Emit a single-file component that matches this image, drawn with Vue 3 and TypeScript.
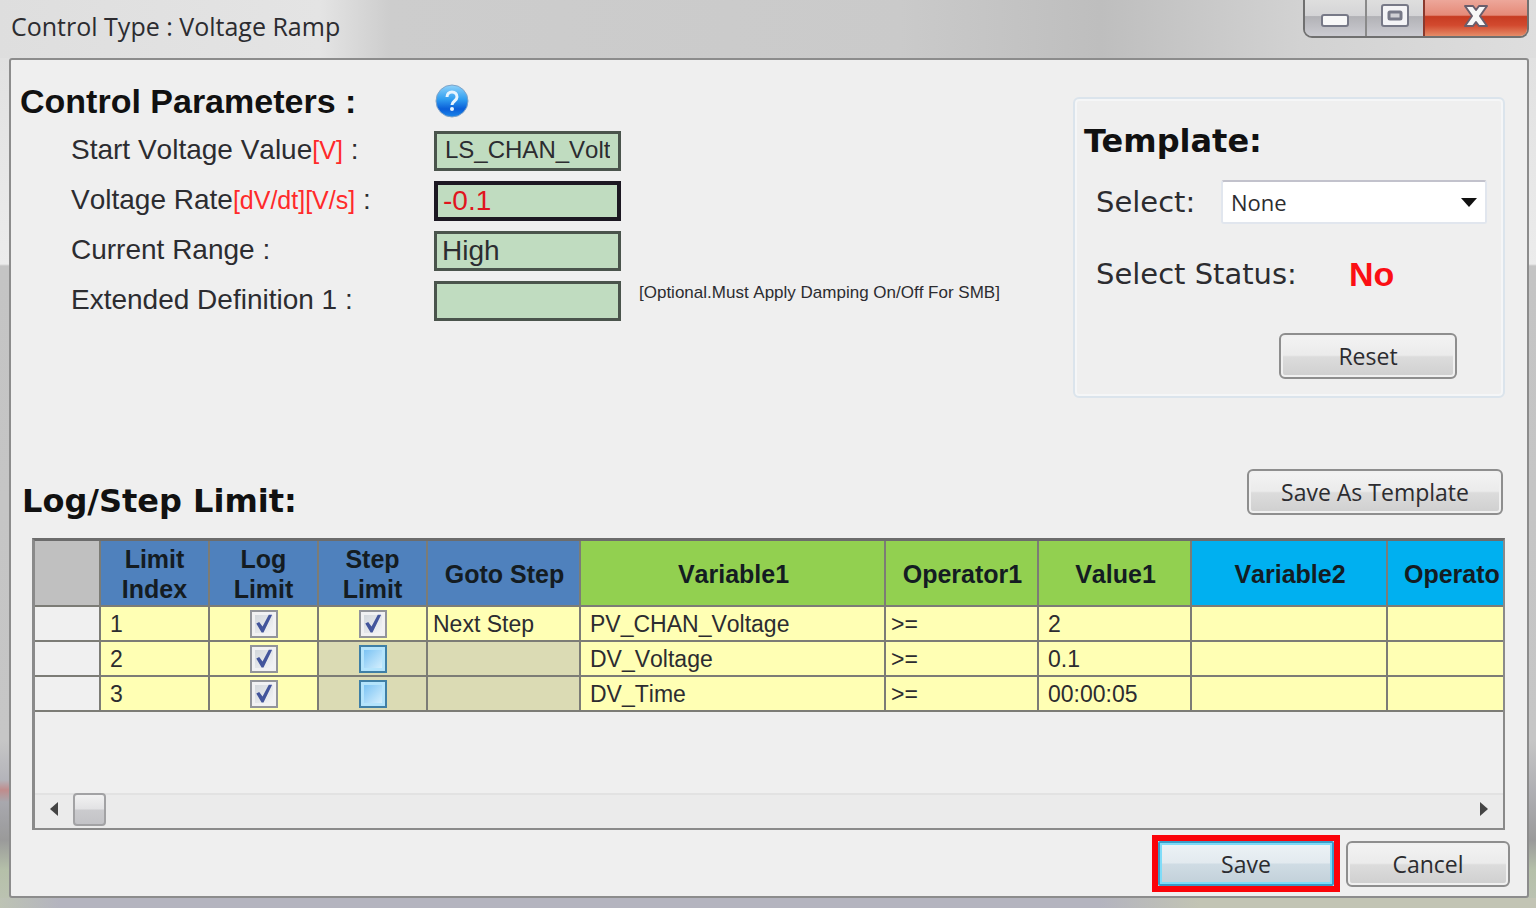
<script setup lang="ts">
import { ref } from 'vue'

interface LimitRow {
  index: number
  log: boolean
  step: boolean
  goto: string
  variable: string
  operator: string
  value: string
}

const startVoltage = ref('LS_CHAN_Volt')
const voltageRate = ref('-0.1')
const currentRange = ref('High')
const extended = ref('')
const template = ref('None')

const headers = [
  { text: 'Limit Index', tone: 'blue two-line' },
  { text: 'Log Limit', tone: 'blue two-line' },
  { text: 'Step Limit', tone: 'blue two-line' },
  { text: 'Goto Step', tone: 'blue' },
  { text: 'Variable1', tone: 'green' },
  { text: 'Operator1', tone: 'green' },
  { text: 'Value1', tone: 'green' },
  { text: 'Variable2', tone: 'cyan' },
  { text: 'Operato', tone: 'cyan last' },
]

const rows = ref<LimitRow[]>([
  { index: 1, log: true, step: true, goto: 'Next Step', variable: 'PV_CHAN_Voltage', operator: '>=', value: '2' },
  { index: 2, log: true, step: false, goto: '', variable: 'DV_Voltage', operator: '>=', value: '0.1' },
  { index: 3, log: true, step: false, goto: '', variable: 'DV_Time', operator: '>=', value: '00:00:05' },
])
</script>

<template>
  <div class="window">
    <header class="titlebar">
      <h1 class="title">Control Type : Voltage Ramp</h1>
      <div class="caption">
        <button type="button" class="cap min" aria-label="Minimize">
          <svg width="28" height="14" viewBox="0 0 28 14"><rect x="1" y="1" width="26" height="11" rx="2" fill="#f8f8f8" stroke="#777987" stroke-width="2" /></svg>
        </button>
        <button type="button" class="cap max" aria-label="Maximize">
          <svg width="28" height="24" viewBox="0 0 28 24"><rect x="1" y="1" width="26" height="21" rx="2" fill="#f4f4f6" stroke="#777987" stroke-width="2" /><rect x="8" y="8" width="12" height="7" rx="1" fill="#d0d0d4" stroke="#777987" stroke-width="3" /></svg>
        </button>
        <button type="button" class="cap close" aria-label="Close">
          <svg width="26" height="22" viewBox="0 0 26 22"><path d="M2 1h8l3 4 3-4h8l-7 10 7 10h-8l-3-4-3 4H2l7-10z" fill="#f7f7f7" stroke="#6a5e6c" stroke-width="2" stroke-linejoin="round" /></svg>
        </button>
      </div>
    </header>

    <main class="client">
      <section class="top">
        <div class="params">
          <h2 class="heading">Control Parameters :</h2>
          <button type="button" class="help" aria-label="Help">
            <svg width="36" height="36" viewBox="0 0 36 36">
              <defs>
                <linearGradient id="ball" x1="0" y1="0" x2="0" y2="1">
                  <stop offset="0" stop-color="#8fd3fa" />
                  <stop offset="0.45" stop-color="#2f9df0" />
                  <stop offset="0.75" stop-color="#0a5ed8" />
                  <stop offset="1" stop-color="#1a86ea" />
                </linearGradient>
              </defs>
              <circle cx="18" cy="18" r="16" fill="url(#ball)" stroke="#7fa3c8" stroke-width="1" />
              <path d="M13 14c0-3 2-5 5-5s5 2 5 5c0 4-5 4-5 8" fill="none" stroke="#e8f5ff" stroke-width="3" />
              <circle cx="18" cy="26" r="2" fill="#e8f5ff" />
            </svg>
          </button>

          <label class="label" for="start">Start Voltage Value<span class="unit">[V]</span> :</label>
          <input id="start" v-model="startVoltage" class="field small" type="text" />

          <label class="label" for="rate">Voltage Rate<span class="unit">[dV/dt][V/s]</span> :</label>
          <input id="rate" v-model="voltageRate" class="field active" type="text" />

          <label class="label" for="range">Current Range :</label>
          <input id="range" v-model="currentRange" class="field" type="text" />

          <label class="label" for="ext">Extended Definition 1 :</label>
          <input id="ext" v-model="extended" class="field" type="text" />
          <span class="note">[Optional.Must Apply Damping On/Off For SMB]</span>
        </div>

        <section class="template">
          <h2 class="wide">Template:</h2>
          <div class="line">
            <label class="wide-label" for="tpl">Select:</label>
            <div class="combo">
              <select id="tpl" v-model="template">
                <option>None</option>
              </select>
              <svg class="arrow" width="16" height="9" viewBox="0 0 16 9"><path d="M0 0h16L8 9z" fill="#111" /></svg>
            </div>
          </div>
          <div class="line status">
            <span class="wide-label">Select Status:</span>
            <strong class="no">No</strong>
          </div>
          <button type="button" class="btn reset">Reset</button>
        </section>
      </section>

      <div class="bar">
        <h2 class="wide">Log/Step Limit:</h2>
        <button type="button" class="btn save-as">Save As Template</button>
      </div>

      <section class="grid">
        <div class="viewport">
          <table>
            <colgroup>
              <col class="c-head" />
              <col class="c-narrow" /><col class="c-narrow" /><col class="c-narrow" />
              <col class="c-mid" /><col class="c-var1" /><col class="c-mid" /><col class="c-mid" />
              <col class="c-var2" /><col />
            </colgroup>
            <thead>
              <tr>
                <td class="corner"></td>
                <th v-for="h in headers" :key="h.text" :class="h.tone" scope="col">{{ h.text }}</th>
              </tr>
            </thead>
            <tbody>
              <tr v-for="r in rows" :key="r.index">
                <td class="rowhead"></td>
                <td class="inset">{{ r.index }}</td>
                <td class="check"><input v-model="r.log" type="checkbox" :aria-label="`Log limit ${r.index}`" /></td>
                <td class="check" :class="{ off: !r.step }"><input v-model="r.step" type="checkbox" :aria-label="`Step limit ${r.index}`" /></td>
                <td :class="{ off: !r.step }">{{ r.goto }}</td>
                <td class="inset">{{ r.variable }}</td>
                <td>{{ r.operator }}</td>
                <td class="inset">{{ r.value }}</td>
                <td></td>
                <td class="last"></td>
              </tr>
            </tbody>
          </table>
        </div>
        <div class="scroll">
          <button type="button" class="step" aria-label="Scroll left">
            <svg width="10" height="16" viewBox="0 0 10 16"><path d="M9 1v14L1 8z" fill="#444" /></svg>
          </button>
          <div class="thumb"></div>
          <button type="button" class="step right" aria-label="Scroll right">
            <svg width="10" height="16" viewBox="0 0 10 16"><path d="M1 1v14l8-7z" fill="#444" /></svg>
          </button>
        </div>
      </section>

      <footer class="actions">
        <div class="highlight"><button type="button" class="btn primary">Save</button></div>
        <button type="button" class="btn cancel">Cancel</button>
      </footer>
    </main>
  </div>
</template>

<style>
body {
  margin: 0;
}
</style>

<style scoped>
* {
  box-sizing: border-box;
}
.window {
  min-height: 100vh;
  display: flex;
  flex-direction: column;
  padding: 0 7px 10px 9px;
  font-family: "Liberation Sans", Arial, sans-serif;
  font-kerning: none;
  color: #2c2c30;
  background:
    linear-gradient(90deg, #bdc3b4 0, #b4b4bf 60px, #b4b4bf 1100px, #c2c4b4 1200px) bottom / 100% 10px no-repeat,
    linear-gradient(90deg, #dedede 0, #e4e4e4 320px, #cdcdcd 390px, #cacaca 900px, #bebebe 1100px, #d2d2d2 1300px, #dedede 100%) top / 100% 58px no-repeat,
    linear-gradient(180deg, #dedede 0, #ececec 264px, #c4c4c4 266px, #c6c6c6 740px, #b4b4ba 780px, #c08c8c 790px, #a8a8ae 802px, #9a9a9a 840px, #b5c0a9 870px, #bdc3b4 100%) left / 9px 100% no-repeat,
    linear-gradient(180deg, #dedede 0, #ececec 264px, #c4c4c4 266px, #c6c6c6 740px, #b0b0b4 790px, #9a9a9a 840px, #b5c0a9 870px, #bdc3b4 100%);
}
h1,
h2 {
  margin: 0;
}
button,
input,
select {
  font-family: inherit;
  font-kerning: inherit;
  color: inherit;
  margin: 0;
}
.titlebar {
  height: 58px;
  display: flex;
  justify-content: space-between;
  align-items: flex-start;
}
.title {
  padding: 9px 2px;
  font: 400 25px/34px "Open Sans", sans-serif;
}
.caption {
  display: flex;
  height: 38px;
  border: 2px solid #707070;
  border-top: 0;
  border-radius: 0 0 9px 9px;
  overflow: hidden;
}
.cap {
  border: 0;
  padding: 0 0 4px;
  display: grid;
  place-items: center;
  background: linear-gradient(#dedede 0, #d4d4d6 44%, #b2b2b6 46%, #cbcbd1 100%);
}
.min {
  width: 60px;
  padding-top: 10px;
}
.max {
  width: 58px;
  border-left: 2px solid #8a8a8a;
}
.close {
  width: 104px;
  border-left: 2px solid #8b3a2e;
  background: linear-gradient(#eda79a 0, #e58a78 42%, #c73c22 46%, #d2492e 70%, #e58c68 100%);
}
.client {
  flex: 1;
  display: flex;
  flex-direction: column;
  background: #efefef;
  border: 2px solid #8c8c8c;
  border-radius: 3px;
  padding: 21px 22px 4px 9px;
}
.top {
  display: flex;
  justify-content: space-between;
  align-items: flex-start;
}
.params {
  display: grid;
  grid-template-columns: 414px 187px auto;
  grid-auto-rows: 40px;
  row-gap: 10px;
}
.heading {
  font-size: 34px;
  line-height: 40px;
  color: #111;
}
.help {
  grid-column: 2 / 4;
  justify-self: start;
  border: 0;
  padding: 0;
  background: none;
  line-height: 0;
}
.label {
  grid-column: 1;
  padding-left: 51px;
  font-size: 28px;
  line-height: 38px;
  white-space: nowrap;
}
.unit {
  font-size: 25px;
  color: #ff2a2a;
}
.field {
  grid-column: 2;
  width: 100%;
  border: 3px solid #4a544c;
  background: #c0dcc0;
  padding: 0 5px;
  font-size: 28px;
}
.small {
  font-size: 24px;
  padding: 0 8px 2px;
}
.active {
  border: 4px solid #1c1822;
  color: #e0141e;
}
.note {
  grid-column: 3;
  padding-left: 18px;
  font-size: 17px;
  line-height: 24px;
  white-space: nowrap;
}
.template {
  width: 432px;
  margin-top: 16px;
  padding: 28px 16px 17px 9px;
  border: 2px solid #dbe4ec;
  border-radius: 6px;
  box-shadow: inset 0 0 0 2px #f5f6f7;
  display: flex;
  flex-direction: column;
}
.wide {
  font: 700 32px/28px "DejaVu Sans", Verdana, sans-serif;
  color: #111;
}
.line {
  display: flex;
  align-items: center;
  justify-content: space-between;
  padding-left: 12px;
  margin-top: 25px;
}
.wide-label {
  font: 400 29px/40px "DejaVu Sans", Verdana, sans-serif;
  white-space: nowrap;
}
.combo {
  width: 266px;
  display: grid;
  align-items: center;
}
.combo select {
  grid-area: 1 / 1;
  height: 44px;
  appearance: none;
  border: 2px solid #e1e6ee;
  border-top-color: #c2c2cc;
  border-radius: 3px;
  background: #fff;
  padding: 0 8px;
  font: 400 22px/30px "Open Sans", sans-serif;
}
.arrow {
  grid-area: 1 / 1;
  justify-self: end;
  margin-right: 10px;
  pointer-events: none;
}
.status {
  justify-content: flex-start;
  gap: 52px;
  margin-top: 30px;
}
.no {
  font-size: 34px;
  line-height: 38px;
  color: #fb0f14;
}
.btn {
  height: 46px;
  border: 2px solid #8e8e8e;
  border-radius: 6px;
  padding: 0;
  background: linear-gradient(#f3f3f3 0, #ebebeb 48%, #dcdcdc 52%, #cfcfcf 100%);
  box-shadow: inset 0 0 0 2px #f0f0f0;
  font: 400 23px/32px "Open Sans", sans-serif;
}
.reset {
  width: 178px;
  align-self: flex-end;
  margin: 39px 30px 0 0;
}
.bar {
  display: flex;
  justify-content: space-between;
  align-items: flex-end;
  margin: 71px 2px 0;
}
.save-as {
  width: 256px;
}
.grid {
  flex: 1;
  display: flex;
  flex-direction: column;
  margin: 23px 0 5px 12px;
  border: 2px solid #8a8a8a;
  border-top: 3px solid #6c6c6c;
  border-left-width: 3px;
  min-width: 0;
}
.viewport {
  flex: 1;
}
table {
  width: 100%;
  table-layout: fixed;
  border-collapse: separate;
  border-spacing: 0;
}
.c-head {
  width: 66px;
}
.c-narrow {
  width: 109px;
}
.c-mid {
  width: 153px;
}
.c-var1 {
  width: 305px;
}
.c-var2 {
  width: 196px;
}
th,
td {
  border: solid #7c7c76;
  border-width: 0 2px 2px 0;
}
th {
  height: 66px;
  padding: 2px 0 0 2px;
  font-size: 25px;
  line-height: 30px;
  color: #141c22;
  white-space: nowrap;
}
.two-line {
  padding: 2px 14px 0;
  white-space: normal;
}
.blue {
  background: #4f81bd;
}
.green {
  background: #92d050;
}
.cyan {
  background: #00b0f0;
}
td {
  height: 35px;
  padding: 0 5px;
  background: #ffffb4;
  font-size: 23px;
  line-height: 30px;
  white-space: nowrap;
}
.last {
  border-right: 0;
}
th.last {
  padding-left: 16px;
  text-align: left;
}
.corner {
  background: #c0c0c0;
}
.rowhead {
  background: #f0f0f0;
}
.inset {
  padding-left: 9px;
}
.off {
  background: #dbdbb4;
}
.check {
  padding: 0;
  text-align: center;
  line-height: 0;
}
.check input {
  appearance: none;
  width: 28px;
  height: 28px;
  vertical-align: middle;
  border: 2px solid #92949a;
  background: linear-gradient(135deg, #cdd2d8, #f8f8fa);
  box-shadow: inset 0 0 0 3px #f1f1f3;
}
.check input::after {
  content: "";
  display: block;
  width: 24px;
  height: 24px;
  background: #43559c;
  clip-path: polygon(20% 50%, 32% 44%, 46% 62%, 72% 14%, 86% 14%, 50% 88%, 42% 88%);
}
.check.off input {
  border-color: #3f7fa6;
  background: linear-gradient(135deg, #6dbcf2, #e2f6ff);
  box-shadow: inset 0 0 0 3px #b4e4fc;
}
.check.off input::after {
  display: none;
}
.scroll {
  display: flex;
  align-items: flex-start;
  height: 35px;
  background: #ebebeb;
  box-shadow: inset 0 2px 0 #e2e2e2;
}
.step {
  width: 38px;
  height: 32px;
  border: 0;
  padding: 0;
  background: none;
  line-height: 0;
}
.right {
  margin-left: auto;
}
.thumb {
  width: 33px;
  height: 33px;
  border: 2px solid #a2a2a4;
  border-radius: 4px;
  background: linear-gradient(#f2f2f2 0, #e2e2e4 48%, #cbcbce 52%, #c3c3c7 100%);
}
.actions {
  display: flex;
  justify-content: flex-end;
  align-items: center;
  gap: 6px;
  margin-right: -5px;
}
.highlight {
  border: 6px solid #fb0309;
  line-height: 0;
}
.primary {
  width: 176px;
  height: 45px;
  border-color: #3a9cc8;
  border-radius: 2px;
  background: linear-gradient(#edf3f6 0, #e2eaef 48%, #cfdce4 52%, #c2d0d9 100%);
  box-shadow: inset 0 0 0 2px #7fdcf8;
}
.cancel {
  width: 164px;
}
</style>
